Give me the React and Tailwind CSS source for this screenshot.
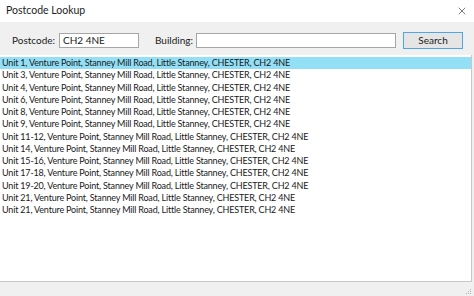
import { X } from "lucide-react";

const rows = [
  "Unit 1, Venture Point, Stanney Mill Road, Little Stanney, CHESTER, CH2 4NE",
  "Unit 3, Venture Point, Stanney Mill Road, Little Stanney, CHESTER, CH2 4NE",
  "Unit 4, Venture Point, Stanney Mill Road, Little Stanney, CHESTER, CH2 4NE",
  "Unit 6, Venture Point, Stanney Mill Road, Little Stanney, CHESTER, CH2 4NE",
  "Unit 8, Venture Point, Stanney Mill Road, Little Stanney, CHESTER, CH2 4NE",
  "Unit 9, Venture Point, Stanney Mill Road, Little Stanney, CHESTER, CH2 4NE",
  "Unit 11-12, Venture Point, Stanney Mill Road, Little Stanney, CHESTER, CH2 4NE",
  "Unit 14, Venture Point, Stanney Mill Road, Little Stanney, CHESTER, CH2 4NE",
  "Unit 15-16, Venture Point, Stanney Mill Road, Little Stanney, CHESTER, CH2 4NE",
  "Unit 17-18, Venture Point, Stanney Mill Road, Little Stanney, CHESTER, CH2 4NE",
  "Unit 19-20, Venture Point, Stanney Mill Road, Little Stanney, CHESTER, CH2 4NE",
  "Unit 21, Venture Point, Stanney Mill Road, Little Stanney, CHESTER, CH2 4NE",
  "Unit 21, Venture Point, Stanney Mill Road, Little Stanney, CHESTER, CH2 4NE",
];

export default function App() {
  return (
    <div className="w-[474px] h-[296px] flex flex-col bg-[#f0f0f0] text-[#1a1a1a] font-['Lato',sans-serif] text-[10px] overflow-hidden">
      {/* title bar */}
      <div className="h-[22px] bg-white flex items-center justify-between pl-[6px] pr-[6px]">
        <span className="text-[10.5px] text-[#222]">Postcode Lookup</span>
        <X className="w-[12px] h-[12px] text-[#333]" strokeWidth={1.3} />
      </div>

      {/* search bar */}
      <div className="h-[33px] flex items-center pl-[12px] pt-[4px]">
        <span className="w-[47px]">Postcode:</span>
        <div className="w-[80px] h-[15px] bg-white border border-[#a6a6a6] flex items-center pl-[3px]">
          CH2 4NE
        </div>
        <span className="ml-[16px] w-[41px]">Building:</span>
        <div className="w-[200px] h-[15px] bg-white border border-[#a6a6a6]" />
        <button className="ml-[7px] w-[60px] h-[17px] bg-[#e5e5e5] border border-[#4fa6e0] flex items-center justify-center">
          Search
        </button>
      </div>

      {/* list */}
      <div className="w-[472px] h-[227px] bg-white border-r border-b border-[#c8c8c8] pt-[2px] text-[9px] tracking-[-0.18px]">
        {rows.map((r, i) => (
          <div
            key={i}
            className={`h-[12.25px] leading-[12px] pl-[2px] whitespace-nowrap overflow-hidden ${i === 0 ? "bg-[#92dff6]" : ""}`}
          >
            {r}
          </div>
        ))}
      </div>

      {/* status strip */}
      <div className="flex-1 flex justify-end items-end pr-[2px] pb-[1px]">
        <svg width="6" height="6" viewBox="0 0 6 6" fill="#b0b0b0">
          <rect x="4" y="0" width="1" height="1" />
          <rect x="2" y="2" width="1" height="1" />
          <rect x="4" y="2" width="1" height="1" />
          <rect x="0" y="4" width="1" height="1" />
          <rect x="2" y="4" width="1" height="1" />
          <rect x="4" y="4" width="1" height="1" />
        </svg>
      </div>
    </div>
  );
}
